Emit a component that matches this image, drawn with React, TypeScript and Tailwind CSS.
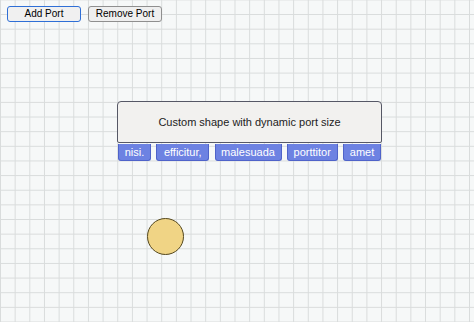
import React from "react";

const ports = [
  { label: "nisi.", w: 33 },
  { label: "efficitur,", w: 53 },
  { label: "malesuada", w: 67 },
  { label: "porttitor", w: 51 },
  { label: "amet", w: 38 },
];

export default function App() {
  return (
    <div
      className="relative w-[474px] h-[322px] overflow-hidden bg-[#f6f8f8] bg-[linear-gradient(to_right,#d9dcdc_1px,transparent_1px),linear-gradient(to_bottom,#d9dcdc_1px,transparent_1px)] bg-[size:14.67px_14.65px] bg-[position:0px_-0.6px] font-['Liberation_Sans',Arial,sans-serif]"
    >
      <div className="flex gap-[7px] pl-[7px] pt-[6px]">
        <button className="h-[16px] w-[74px] rounded-[3px] border-[1.5px] border-[#2f6fd6] bg-[#f0f0f0] text-[10px] leading-none text-black">
          Add Port
        </button>
        <button className="h-[16px] w-[74px] rounded-[3px] border border-[#8f8f8f] bg-[#efefef] text-[10px] leading-none text-black">
          Remove Port
        </button>
      </div>

      <div className="absolute left-[117px] top-[101px] w-[265px]">
        <div className="flex h-[42px] items-center justify-center rounded-t-[4px] rounded-b-[2px] border-[1.5px] border-[#565866] bg-[#f2f1ef] text-[11px] text-[#222]">
          Custom shape with dynamic port size
        </div>
        <div className="mt-[1px] flex justify-between px-[1px]">
          {ports.map((p) => (
            <div
              key={p.label}
              style={{ width: p.w }}
              className="flex h-[17px] items-center justify-center rounded-b-[3px] border border-t-0 border-[#4f63c9] bg-[#6d82e2] text-[11px] leading-none text-white"
            >
              {p.label}
            </div>
          ))}
        </div>
      </div>

      <div className="absolute left-[147px] top-[218px] h-[37px] w-[37px] rounded-full border-[1.5px] border-[#54481f] bg-[#f0d485]" />
    </div>
  );
}
